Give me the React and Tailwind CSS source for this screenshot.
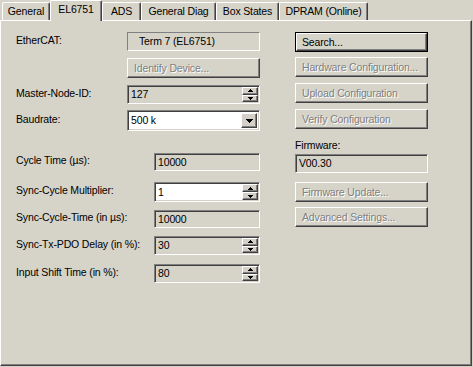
import React from 'react';

const font = { fontFamily: '"Liberation Sans", Arial, sans-serif' };

const raised =
  'border border-t-white border-l-white border-r-[#404040] border-b-[#404040] shadow-[inset_-1px_-1px_#808080]';
const sunken =
  'border border-t-[#808080] border-l-[#808080] border-r-white border-b-white shadow-[inset_1px_1px_#404040,inset_-1px_-1px_#d4d0c8]';

const tabs = [
  { name: 'General', w: 'w-[48px]' },
  { name: 'EL6751', w: 'w-[52px]', active: true },
  { name: 'ADS', w: 'w-[39px]' },
  { name: 'General Diag', w: 'w-[75px]' },
  { name: 'Box States', w: 'w-[63px]' },
  { name: 'DPRAM (Online)', w: 'w-[89px]' },
];

function Tab({ name, w, active }) {
  if (active) {
    return (
      <div
        className={`${w} h-[21px] -mb-px flex items-start justify-center pt-[3px] bg-[#d6d3c9] border-l border-t border-l-white border-t-white border-r border-r-[#404040] shadow-[inset_-1px_0_#808080] rounded-t-[2px]`}
      >
        {name}
      </div>
    );
  }
  return (
    <div
      className={`${w} h-[18px] flex items-start justify-center pt-[3px] border-l border-t border-l-white border-t-white border-r border-r-[#404040] shadow-[inset_-1px_0_#808080] rounded-t-[2px]`}
    >
      {name}
    </div>
  );
}

function Button({ children, disabled, isDefault, className = '' }) {
  const label = disabled ? (
    <span className="text-[#808080] [text-shadow:1px_1px_0_#ffffff]">{children}</span>
  ) : (
    <span>{children}</span>
  );
  if (isDefault) {
    return (
      <div className={`h-[20px] border border-black ${className}`}>
        <div className={`h-full ${raised} flex items-center pl-[5px]`}>{label}</div>
      </div>
    );
  }
  return (
    <div className={`h-[20px] ${raised} flex items-center pl-[6px] ${className}`}>{label}</div>
  );
}

function ReadOnly({ value, className = '' }) {
  return (
    <div className={`h-[18px] ${sunken} flex items-center pl-[3px] ${className}`}>{value}</div>
  );
}

function Up() {
  return (
    <svg width="5" height="3" viewBox="0 0 5 3">
      <path d="M2 0h1v1h1v1h1v1H0V2h1V1h1z" fill="#000" />
    </svg>
  );
}

function Down() {
  return (
    <svg width="5" height="3" viewBox="0 0 5 3">
      <path d="M0 0h5v1H4v1H3v1H2V2H1V1H0z" fill="#000" />
    </svg>
  );
}

function Spin({ value, white, className = '' }) {
  return (
    <div
      className={`h-[19px] ${sunken} flex items-stretch p-[1px] ${white ? 'bg-white' : ''} ${className}`}
    >
      <div className="flex-1 flex items-center pl-[2px]">{value}</div>
      <div className="w-[16px] flex flex-col">
        <div className={`flex-1 ${raised} bg-[#d4d0c8] flex items-center justify-center`}>
          <Up />
        </div>
        <div className={`flex-1 ${raised} bg-[#d4d0c8] flex items-center justify-center`}>
          <Down />
        </div>
      </div>
    </div>
  );
}

function Combo({ value, className = '' }) {
  return (
    <div className={`h-[21px] ${sunken} bg-white flex items-stretch p-[2px] ${className}`}>
      <div className="flex-1 flex items-center pl-[1px]">{value}</div>
      <div className={`w-[16px] ${raised} bg-[#d4d0c8] flex items-center justify-center`}>
        <svg width="7" height="4" viewBox="0 0 7 4">
          <path d="M0 0h7v1H6v1H5v1H4v1H3V3H2V2H1V1H0z" fill="#000" />
        </svg>
      </div>
    </div>
  );
}

function Row({ label, children, className = '' }) {
  return (
    <div className={`flex items-center justify-between ${className}`}>
      <span className="-mt-[3px]">{label}</span>
      {children}
    </div>
  );
}

export default function App() {
  return (
    <div
      className="w-[473px] h-[367px] bg-[#d6d3c9] text-black text-[10.5px] tracking-[-0.15px] leading-none whitespace-nowrap flex flex-col overflow-hidden"
      style={font}
    >
      <div className="relative z-10 h-[20px] flex items-end pl-[2px]">
        {tabs.map((t) => (
          <Tab key={t.name} {...t} />
        ))}
      </div>
      <div className="flex-1 mr-[1px] mb-[1px] border border-t-white border-l-white border-r-[#404040] border-b-[#404040] shadow-[inset_-1px_-1px_#808080] flex pl-[15px] pt-[11px]">
        <div className="w-[244px] flex flex-col">
          <Row label="EtherCAT:">
            <div className="w-[133px] h-[19px] border border-t-[#808080] border-l-[#808080] border-r-white border-b-white flex items-center pl-[11px]">
              Term 7 (EL6751)
            </div>
          </Row>
          <div className="flex justify-end mt-[7px]">
            <Button disabled className="w-[133px]">
              Identify Device...
            </Button>
          </div>
          <Row label="Master-Node-ID:" className="mt-[7px]">
            <Spin value="127" className="w-[133px]" />
          </Row>
          <Row label="Baudrate:" className="mt-[6px]">
            <Combo value="500 k" className="w-[133px]" />
          </Row>
          <Row label="Cycle Time (µs):" className="mt-[22px]">
            <ReadOnly value="10000" className="w-[106px]" />
          </Row>
          <Row label="Sync-Cycle Multiplier:" className="mt-[11px]">
            <Spin value="1" white className="w-[106px] h-[20px]" />
          </Row>
          <Row label="Sync-Cycle-Time (in µs):" className="mt-[8px]">
            <ReadOnly value="10000" className="w-[106px]" />
          </Row>
          <Row label="Sync-Tx-PDO Delay (in %):" className="mt-[8px]">
            <Spin value="30" className="w-[106px]" />
          </Row>
          <Row label="Input Shift Time (in %):" className="mt-[9px]">
            <Spin value="80" className="w-[106px] h-[18px]" />
          </Row>
        </div>
        <div className="w-[133px] ml-[35px] flex flex-col">
          <Button isDefault>Search...</Button>
          <Button disabled className="mt-[5px]">
            Hardware Configuration...
          </Button>
          <Button disabled className="mt-[6px]">
            Upload Configuration
          </Button>
          <Button disabled className="mt-[6px]">
            Verify Configuration
          </Button>
          <div className="mt-[11px] h-[12px]">Firmware:</div>
          <ReadOnly value="V00.30" className="mt-[2px] h-[19px]" />
          <Button disabled className="mt-[9px]">
            Firmware Update...
          </Button>
          <Button disabled className="mt-[5px]">
            Advanced Settings...
          </Button>
        </div>
      </div>
    </div>
  );
}
